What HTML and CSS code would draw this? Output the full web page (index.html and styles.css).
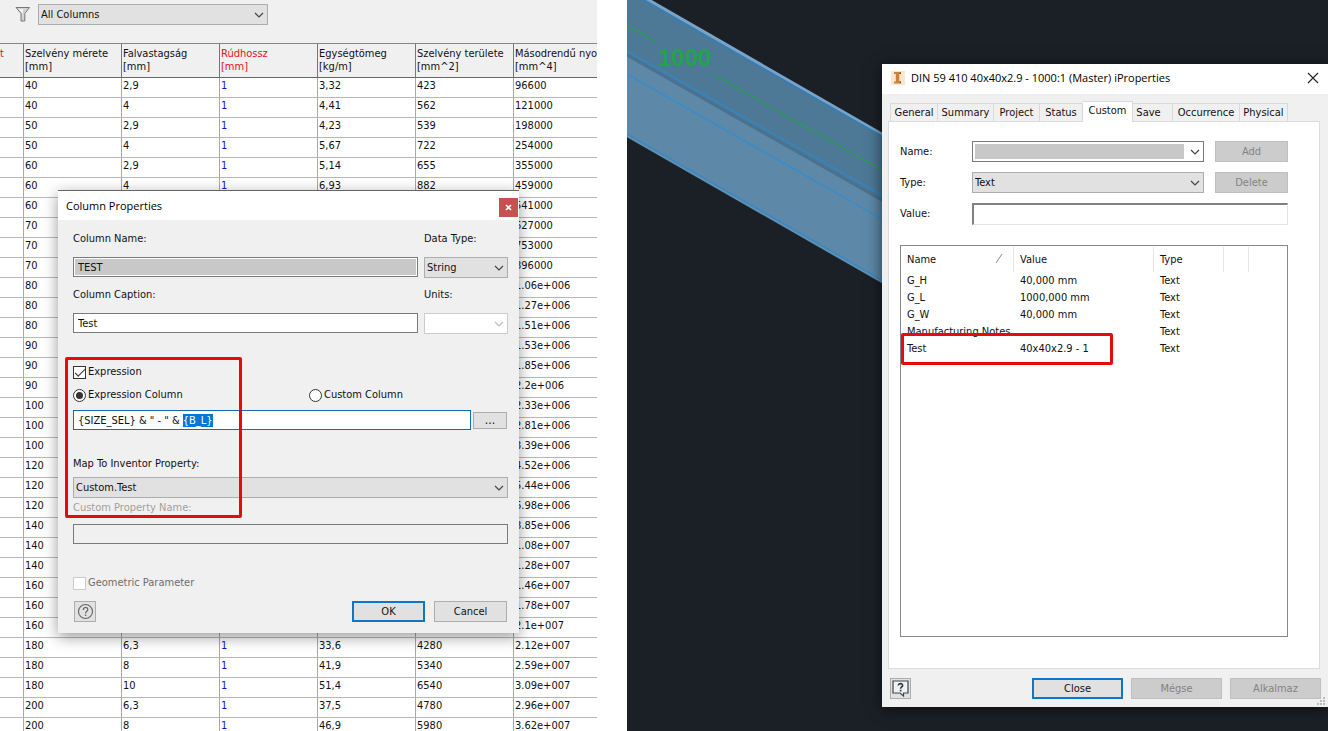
FILE: index.html
```html
<!DOCTYPE html>
<html lang="hu">
<head>
<meta charset="utf-8">
<title>Column Properties</title>
<link rel="stylesheet" href="styles.css">
</head>
<body>
<svg width="0" height="0" class="defs" aria-hidden="true">
  <symbol id="chevron" viewBox="0 0 10 6"><path d="M1 1 L5 5 L9 1" fill="none" stroke="currentColor" stroke-width="1.2"/></symbol>
</svg>
<main class="workspace">
  <section class="editor">
    <div class="toolbar">
      <svg class="funnel" viewBox="0 0 16 17" width="16" height="17" aria-hidden="true">
        <path d="M1 1.5 H14.5 L9.8 7.5 V15 H6 V7.5 Z" fill="#d2d2d2" stroke="#777" stroke-width="1"/>
        <path d="M3.5 3 H8 L7.5 13 V7 Z" fill="#f6f6f6"/>
      </svg>
      <div class="select filter"><select aria-label="Columns"><option>All Columns</option></select><svg class="chev"><use href="#chevron"/></svg></div>
    </div>
    <div class="table-wrap">
    <table class="sizes">
      <colgroup><col class="c-first"><col class="c"><col class="c"><col class="c"><col class="c"><col class="c"><col class="c-last"></colgroup>
      <thead><tr><th class="red cut">t</th><th>Szelvény mérete<br>[mm]</th><th>Falvastagság<br>[mm]</th><th class="red">Rúdhossz<br>[mm]</th><th>Egységtömeg<br>[kg/m]</th><th>Szelvény területe<br>[mm^2]</th><th>Másodrendű nyom<br>[mm^4]</th></tr></thead>
      <tbody id="rows"></tbody>
    </table>
    </div>

    <form class="dialog props" onsubmit="return false">
      <header class="props-title"><h1>Column Properties</h1><button type="button" class="close-red" aria-label="Close"><svg viewBox="0 0 7 7" width="7" height="7"><path d="M1 1 L6 6 M6 1 L1 6" stroke="#fff" stroke-width="1.6"/></svg></button></header>
      <div class="props-body">
        <div class="pair labels"><label for="cname">Column Name:</label><label for="dtype">Data Type:</label></div>
        <div class="pair after-label"><input id="cname" class="box gray" type="text" value="TEST" readonly><div class="select"><select id="dtype"><option>String</option></select><svg class="chev"><use href="#chevron"/></svg></div></div>
        <div class="pair labels second"><label for="ccap">Column Caption:</label><label for="units">Units:</label></div>
        <div class="pair after-label"><input id="ccap" class="box" type="text" value="Test"><div class="select off"><select id="units" disabled><option></option></select><svg class="chev"><use href="#chevron"/></svg></div></div>
        <label class="check expr"><input type="checkbox" checked><span>Expression</span></label>
        <div class="radios">
          <label class="check"><input type="radio" name="mode" checked><span>Expression Column</span></label>
          <label class="check"><input type="radio" name="mode"><span>Custom Column</span></label>
        </div>
        <div class="formula"><input id="formula" class="box" type="text" aria-label="Expression" value="{SIZE_SEL} &amp; &quot; - &quot; &amp; {B_L}"><button type="button" class="btn dots">...</button></div>
        <label class="line map" for="mapto">Map To Inventor Property:</label>
        <div class="select mapsel"><select id="mapto"><option>Custom.Test</option></select><svg class="chev"><use href="#chevron"/></svg></div>
        <label class="line faded" for="pname">Custom Property Name:</label>
        <input id="pname" class="box blank" type="text" disabled>
        <label class="check geo"><input type="checkbox" disabled><span>Geometric Parameter</span></label>
        <div class="props-foot">
          <button type="button" class="btn help" aria-label="Help"><svg viewBox="0 0 17 17" width="17" height="17"><circle cx="8.5" cy="8.5" r="7" fill="none" stroke="#666" stroke-width="1.1"/><path d="M6.3 7 C6.3 3.6 11 3.8 10.8 6.6 C10.7 8.3 8.6 8.2 8.6 10.4" fill="none" stroke="#666" stroke-width="1.2"/><rect x="7.9" y="11.6" width="1.4" height="1.4" fill="#666"/></svg></button>
          <button type="button" class="btn primary">OK</button>
          <button type="button" class="btn">Cancel</button>
        </div>
      </div>
      <div class="mark mark-expr"></div>
    </form>
  </section>

  <section class="viewport">
    <svg class="scene" width="701" height="731" viewBox="0 0 701 731" aria-hidden="true">
      <polygon points="0,0 20,0 260,137 260,285 0,136" fill="#5d88a8"/>
      <polygon points="0,0 20,0 260,137 260,203 0,54" fill="#4d7896"/>
      <path d="M0 55 L260 203" stroke="#4a718e" stroke-width="3"/>
      <path d="M20 -1 L260 137" stroke="#78a4cb" stroke-width="3"/>
      <path d="M14 -1 L260 139" stroke="#347fb6" stroke-width="1.5"/>
      <path d="M0 51 L260 198" stroke="#3585c0" stroke-width="1.6"/>
      <path d="M0 74 L260 222" stroke="#2f8ed2" stroke-width="1.3"/>
      <path d="M0 136 L260 285" stroke="#628fae" stroke-width="2"/>
      <path d="M0 134 L260 283" stroke="#3489c9" stroke-width="1.3"/>
      <path d="M0 25 L29 42 M89 76 L260 173" stroke="#25a24e" stroke-width="1.2" stroke-dasharray="22 1"/>
      <text x="31" y="66" class="dim">1000</text>
    </svg>

    <form class="dialog iprops" onsubmit="return false">
      <header class="ip-title">
        <svg viewBox="0 0 16 16" width="16" height="16" aria-hidden="true"><rect x="1" y="1" width="14" height="14" fill="#fce6d2"/><path d="M4 2 H11 V4 H9.3 V11.5 H11 V13.5 H4 V11.5 H5.8 V4 H4 Z" fill="#c98238"/><path d="M9.3 4 L11 2 V4 Z M9.3 11.5 L11 13.5 V11.5 Z" fill="#7c3f0e"/></svg>
        <h2>DIN 59 410 40x40x2.9 - 1000:1 (Master) iProperties</h2>
        <button type="button" class="close-x" aria-label="Close"><svg viewBox="0 0 12 12" width="12" height="12"><path d="M1 1 L11 11 M11 1 L1 11" stroke="#222" stroke-width="1.1"/></svg></button>
      </header>
      <div class="ip-body">
        <nav class="tabs">
          <button type="button" class="t48">General</button><button type="button" class="t56">Summary</button><button type="button" class="t46">Project</button><button type="button" class="t43">Status</button><button type="button" class="t50 active">Custom</button><button type="button" class="t40">Save</button><button type="button" class="t67">Occurrence</button><button type="button" class="t48">Physical</button>
        </nav>
        <div class="page">
          <div class="fields">
            <label for="n">Name:</label>
            <div class="select combo"><select id="n"><option></option></select><svg class="chev"><use href="#chevron"/></svg></div>
            <button type="button" class="btn" disabled>Add</button>
            <label for="t">Type:</label>
            <div class="select"><select id="t"><option>Text</option></select><svg class="chev"><use href="#chevron"/></svg></div>
            <button type="button" class="btn" disabled>Delete</button>
            <label for="v">Value:</label>
            <input id="v" class="sunken" type="text">
          </div>
          <div class="list">
            <table>
              <colgroup><col class="l-name"><col class="l-value"><col class="l-type"><col class="l-gap"><col></colgroup>
              <thead><tr><th><span class="sorted">Name<svg viewBox="0 0 8 11" width="8" height="11"><path d="M1 10 L7 1" stroke="#888" fill="none"/></svg></span></th><th>Value</th><th>Type</th><th></th><th></th></tr></thead>
              <tbody>
                <tr><td>G_H</td><td>40,000 mm</td><td>Text</td></tr>
                <tr><td>G_L</td><td>1000,000 mm</td><td>Text</td></tr>
                <tr><td>G_W</td><td>40,000 mm</td><td>Text</td></tr>
                <tr><td>Manufacturing Notes</td><td></td><td>Text</td></tr>
                <tr><td>Test</td><td>40x40x2.9 - 1</td><td>Text</td></tr>
              </tbody>
            </table>
            <div class="mark mark-test"></div>
          </div>
        </div>
        <footer class="ip-foot">
          <button type="button" class="btn help" aria-label="Help"><svg viewBox="0 0 17 17" width="17" height="17"><path d="M1 1 H16 V13 H11.5 V16 L8 13 H1 Z" fill="#eef2f5" stroke="#444" stroke-width="1.2"/><path d="M6.3 5.6 C6.3 2.9 10.8 3 10.6 5.6 C10.5 7 8.6 7 8.6 8.8" fill="none" stroke="#333" stroke-width="1.6"/><rect x="7.8" y="9.8" width="1.7" height="1.6" fill="#333"/></svg></button>
          <button type="button" class="btn primary">Close</button>
          <button type="button" class="btn" disabled>Mégse</button>
          <button type="button" class="btn" disabled>Alkalmaz</button>
        </footer>
      </div>
      <svg class="grip" viewBox="0 0 8 8" width="8" height="8" aria-hidden="true"><path d="M6 0h2v2h-2z M3 3h2v2h-2z M6 3h2v2h-2z M0 6h2v2h-2z M3 6h2v2h-2z M6 6h2v2h-2z" fill="#bcbcbc"/></svg>
    </form>
  </section>
</main>
<script src="app.js"></script>
</body>
</html>
```

FILE: app.js
```js
const data = [
  ["40", "2,9", "1", "3,32", "423", "96600"],
  ["40", "4", "1", "4,41", "562", "121000"],
  ["50", "2,9", "1", "4,23", "539", "198000"],
  ["50", "4", "1", "5,67", "722", "254000"],
  ["60", "2,9", "1", "5,14", "655", "355000"],
  ["60", "4", "1", "6,93", "882", "459000"],
  ["60", "", "", "", "", "541000"],
  ["70", "", "", "", "", "627000"],
  ["70", "", "", "", "", "753000"],
  ["70", "", "", "", "", "896000"],
  ["80", "", "", "", "", "1.06e+006"],
  ["80", "", "", "", "", "1.27e+006"],
  ["80", "", "", "", "", "1.51e+006"],
  ["90", "", "", "", "", "1.53e+006"],
  ["90", "", "", "", "", "1.85e+006"],
  ["90", "", "", "", "", "2.2e+006"],
  ["100", "", "", "", "", "2.33e+006"],
  ["100", "", "", "", "", "2.81e+006"],
  ["100", "", "", "", "", "3.39e+006"],
  ["120", "", "", "", "", "4.52e+006"],
  ["120", "", "", "", "", "5.44e+006"],
  ["120", "", "", "", "", "6.98e+006"],
  ["140", "", "", "", "", "8.85e+006"],
  ["140", "", "", "", "", "1.08e+007"],
  ["140", "", "", "", "", "1.28e+007"],
  ["160", "", "", "", "", "1.46e+007"],
  ["160", "", "", "", "", "1.78e+007"],
  ["160", "", "", "", "", "2.1e+007"],
  ["180", "6,3", "1", "33,6", "4280", "2.12e+007"],
  ["180", "8", "1", "41,9", "5340", "2.59e+007"],
  ["180", "10", "1", "51,4", "6540", "3.09e+007"],
  ["200", "6,3", "1", "37,5", "4780", "2.96e+007"],
  ["200", "8", "1", "46,9", "5980", "3.62e+007"]
];
const body = document.getElementById("rows");
for (const record of data) {
  const tr = body.insertRow();
  tr.insertCell();
  record.forEach((value, i) => {
    const td = tr.insertCell();
    td.textContent = value;
    if (i === 2) td.className = "blue";
  });
}
const formula = document.getElementById("formula");
formula.focus();
formula.setSelectionRange(formula.value.indexOf("{B_L}"), formula.value.length);
```

FILE: styles.css
```css
* { box-sizing: border-box; }
body {
  margin: 0;
  height: 100vh;
  overflow: hidden;
  background: #fff;
  color: #111;
  font: 11px/14px "DejaVu Sans Condensed", "Noto Sans", sans-serif;
}
input, select, button { font: inherit; color: inherit; margin: 0; border-radius: 0; }
h1, h2 { margin: 0; font: 11px/16px "Open Sans", "Noto Sans", sans-serif; color: #000; }
.defs { position: absolute; }
.workspace {
  display: grid;
  grid-template-columns: 597fr 701fr;
  column-gap: 30px;
  height: 100%;
}

/* shared controls */
.select { position: relative; height: 21px; background: #e1e1e1; border: 1px solid #adadad; }
.select select { display: block; width: 100%; height: 100%; border: 0; padding: 0 18px 0 2px; background: transparent; appearance: none; outline: 0; opacity: 1; }
.chev { position: absolute; right: 3px; top: 7px; width: 10px; height: 6px; color: #444; pointer-events: none; }
.select.off { background: #fff; border-color: #ccc; }
.select.off .chev { color: #bbb; }
.box { min-width: 0; height: 20px; padding: 0 4px; background: #fff; border: 1px solid #7a7a7a; outline: 0; }
.box.gray { background: #c8c8c8; box-shadow: inset 0 0 0 1px #fff; }
.box.blank { background: #f0f0f0; }
.btn { height: 21px; padding: 0; background: #e1e1e1; border: 1px solid #adadad; text-align: center; }
.btn.primary { border: 2px solid #0f75c4; }
.btn:disabled { background: #ccc; border-color: #bfbfbf; color: #838383; }
.btn svg { display: block; margin: auto; }
.check { display: flex; align-items: center; gap: 2px; height: 18px; }
.check input { appearance: none; width: 13px; height: 13px; background: #fff; border: 1px solid #333; display: grid; place-items: center; }
.check input[type="checkbox"]:checked::before { content: ""; width: 9px; height: 4px; border: solid #333; border-width: 0 0 1px 1px; transform: translateY(-1px) rotate(-45deg); }
.check input[type="radio"] { border-radius: 50%; }
.check input[type="radio"]:checked::before { content: ""; width: 7px; height: 7px; border-radius: 50%; background: #333; }
.check input:disabled { border-color: #ccc; }
.check input:disabled + span { color: #6d6d6d; }
.mark { position: absolute; border: 3px solid #e60b0b; border-radius: 2px; pointer-events: none; }
.dialog { position: absolute; background: #f0f0f0; }

/* table editor */
.editor { position: relative; overflow: hidden; min-width: 0; }
.toolbar { display: flex; align-items: center; gap: 7px; height: 43px; padding: 0 0 14px 15px; background: #f0f0f0; }
.filter { width: 230px; }
.sizes { width: 100%; table-layout: fixed; border-collapse: separate; border-spacing: 0; }
.c-first { width: 24px; }
.c { width: 98px; }
.sizes th { height: 35px; padding: 3px 0 0 1px; border-top: 1px solid #888; border-right: 1px solid #777; border-bottom: 1px solid #666; background: #f0f0f0; font-weight: normal; line-height: 13px; text-align: left; vertical-align: top; white-space: nowrap; overflow: hidden; }
.sizes th:last-child, .sizes td:last-child { border-right: 0; }
.sizes td { height: 20px; padding: 0 0 3px 1px; border-right: 1px solid #a8a8a8; border-bottom: 1px solid #b8b8b8; line-height: 16px; white-space: nowrap; }
.sizes .red { color: #e01020; }
.sizes .cut { padding-left: 0; }
.sizes .blue { color: #1414d8; }

/* column properties */
.props { left: 58px; top: 190px; width: 461px; border-top: 1px solid #666; box-shadow: 0 4px 14px rgba(0,0,0,.4); }
.props-title { display: flex; justify-content: space-between; align-items: center; height: 29px; padding: 0 1px 0 8px; background: #fff; }
.close-red { width: 19px; height: 19px; margin-top: 3px; padding: 0; border: 0; background: #c75050; display: grid; place-items: center; }
.props-body { display: flex; flex-direction: column; padding: 10px 11px 11px 15px; }
.pair { display: grid; grid-template-columns: 1fr 84px; column-gap: 6px; align-items: start; }
.labels, .line { line-height: 18px; }
.labels.second { margin-top: 8px; }
.after-label { margin-top: 9px; }
.expr { margin-top: 29px; }
.radios { display: grid; grid-template-columns: 236px 1fr; margin-top: 5px; }
.formula { display: flex; align-items: center; gap: 2px; margin-top: 6px; padding-right: 1px; }
.formula .box { flex: 1; border-color: #0f6cb5; caret-color: transparent; }
.formula .box::selection { background: #0078d7; color: #fff; }
.dots { width: 34px; height: 17px; font-size: 12px; line-height: 14px; }
.map { margin-top: 25px; }
.mapsel { margin-top: 4px; }
.faded { margin-top: 1px; color: #a0a0a0; }
.blank { margin-top: 7px; }
.geo { margin-top: 30px; }
.props-foot { display: grid; grid-template-columns: 22px 1fr 73px 73px; column-gap: 9px; margin-top: 9px; padding: 0 1px; }
.props-foot .primary { grid-column: 3; }
.mark-expr { left: 7px; top: 166px; width: 177px; height: 161px; }

/* model view */
.viewport { position: relative; overflow: hidden; background: #1b2026; min-width: 0; }
.scene { display: block; }
.dim { font: bold 24px "Liberation Sans", sans-serif; fill: #22a34c; }

/* iProperties */
.iprops { left: 255px; right: 0; top: 64px; box-shadow: 0 2px 14px rgba(0,0,0,.6); }
.ip-title { display: flex; align-items: center; gap: 5px; height: 30px; padding: 0 9px 2px 8px; background: #fff; }
.ip-title h2 { flex: 1; }
.close-x { padding: 0; border: 0; background: none; width: 12px; height: 12px; }
.close-x svg { display: block; }
.ip-body { padding: 7px 7px 8px 6px; }
.tabs { display: flex; align-items: flex-end; height: 20px; padding-left: 2px; }
.tabs button { height: 18px; padding: 0; border: 1px solid #d9d9d9; border-width: 1px 1px 0 0; background: #f0f0f0; white-space: nowrap; }
.tabs button:first-child { border-left-width: 1px; }
.tabs .active { height: 21px; margin-bottom: -1px; padding-bottom: 2px; background: #fff; position: relative; }
.t40 { width: 40px; } .t43 { width: 43px; } .t46 { width: 46px; } .t48 { width: 48px; }
.t50 { width: 50px; } .t56 { width: 56px; } .t67 { width: 67px; }
.tabs .t40 { padding-right: 8px; }
.page { margin-right: 1px; padding: 19px 31px 31px 11px; border: 1px solid #dcdcdc; background: #fff; }
.fields { display: grid; grid-template-columns: 61px 1fr 73px; grid-template-rows: 21px 21px 22px; gap: 10px 11px; align-items: center; }
.combo { background: #fff; border-color: #7a7a7a; }
.combo select { background: #c8c8c8; background-clip: content-box; padding: 2px 19px 2px 2px; }
.sunken { grid-column: 2 / 4; width: 100%; height: 22px; border: 1px solid #e3e3e3; border-top: 2px solid #808080; border-left: 2px solid #808080; background: #fff; outline: 0; }
.list { position: relative; min-height: 392px; margin-top: 20px; padding-top: 1px; border: 1px solid #828790; }
.list table { width: 100%; table-layout: fixed; border-collapse: separate; border-spacing: 0; }
.list th { height: 25px; padding: 0 6px; border-right: 1px solid #e5e5e5; font-weight: normal; text-align: left; }
.list th:last-child { border-right: 0; }
.list td { height: 17px; padding: 0 6px; line-height: 17px; white-space: nowrap; }
.l-name { width: 113px; } .l-value { width: 140px; } .l-type { width: 70px; } .l-gap { width: 25px; }
.sorted { display: flex; justify-content: space-between; padding-right: 4px; }
.mark-test { left: 0; top: 87px; width: 212px; height: 32px; }
.ip-foot { display: grid; grid-template-columns: 21px 1fr 91px 91px 91px; column-gap: 8px; margin-top: 9px; padding-left: 2px; }
.ip-foot .primary { grid-column: 3; }
.grip { position: absolute; right: 3px; bottom: 2px; }
```
